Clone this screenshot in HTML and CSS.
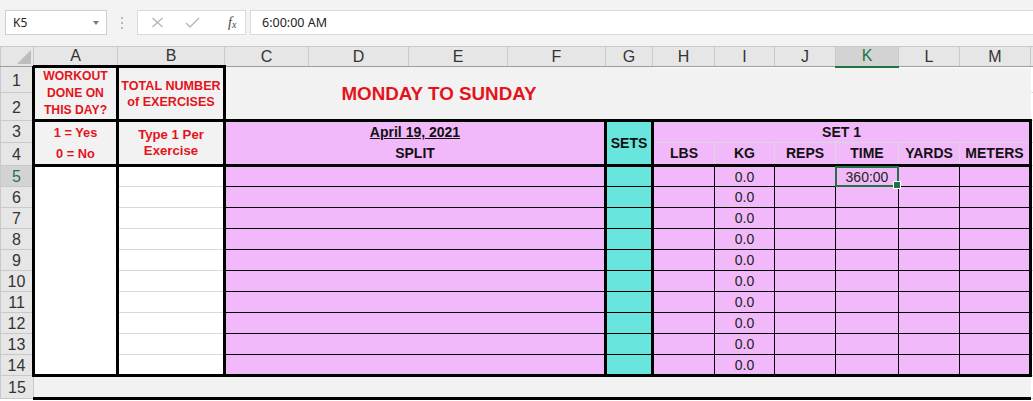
FILE: index.html
```html
<!DOCTYPE html>
<html lang="en">
<head>
    <meta charset="UTF-8">
    <title>Workout Log</title>
    <link rel="stylesheet" href="styles.css">
</head>
<body>
    <!-- Barra de fórmulas -->
    <div class="formula-bar">
        <div class="name-box">
            <span>K5</span>
            <span class="caret"></span>
        </div>
        <div class="bar-dots"><i></i><i></i><i></i></div>
        <div class="fx-box">
            <svg width="13" height="11" viewBox="0 0 13 11"><path d="M1.5 1 L11.5 10 M11.5 1 L1.5 10" stroke="#b4b4b4" stroke-width="1.3" fill="none"/></svg>
            <svg width="15" height="11" viewBox="0 0 15 11"><path d="M1 6 L5 10 L14 1" stroke="#b4b4b4" stroke-width="1.3" fill="none"/></svg>
            <span class="fx">f<sub>x</sub></span>
        </div>
        <div class="formula-input">6:00:00 AM</div>
    </div>

    <div class="sheet-wrap">
        <table class="sheet">
            <colgroup>
                <col style="width:33px"><col style="width:84px"><col style="width:107px">
                <col style="width:84px"><col style="width:100px"><col style="width:99px"><col style="width:98px">
                <col style="width:47px"><col style="width:62px"><col style="width:60px"><col style="width:61px">
                <col style="width:63px"><col style="width:61px"><col style="width:71px"><col style="width:40px">
            </colgroup>
            <tr class="hdr">
                <td class="ch corner"><span class="tri"></span></td>
                <td class="ch">A</td><td class="ch">B</td><td class="ch">C</td><td class="ch">D</td>
                <td class="ch">E</td><td class="ch">F</td><td class="ch">G</td><td class="ch">H</td>
                <td class="ch">I</td><td class="ch">J</td><td class="ch sel">K</td><td class="ch">L</td>
                <td class="ch">M</td><td class="ch"></td>
            </tr>
            <tr class="r1">
                <td class="rh">1</td>
                <td rowspan="2" class="grey lbl tk workout">WORKOUT<br>DONE ON<br>THIS DAY?</td>
                <td rowspan="2" class="grey lbl tk total">TOTAL NUMBER<br>of EXERCISES</td>
                <td rowspan="2" colspan="5" class="grey title tk-l">MONDAY TO SUNDAY</td>
                <td rowspan="2" colspan="6" class="grey plain"></td>
                <td></td>
            </tr>
            <tr class="r2">
                <td class="rh">2</td>
                <td></td>
            </tr>
            <tr class="r3">
                <td class="rh">3</td>
                <td rowspan="2" class="grey lbl tk yesno"><div>1 = Yes</div><div>0 = No</div></td>
                <td rowspan="2" class="grey lbl tk type">Type 1 Per<br>Exercise</td>
                <td rowspan="2" colspan="4" class="pink hd tk-l tk-t tk-b split"><div class="date">April 19, 2021</div><div>SPLIT</div></td>
                <td rowspan="2" class="teal hd tk">SETS</td>
                <td colspan="6" class="pink hd tk-t tk-r">SET 1</td>
                <td></td>
            </tr>
            <tr class="r4">
                <td class="rh">4</td>
                <td class="pink hd tk-b">LBS</td>
                <td class="pink hd tk-b">KG</td>
                <td class="pink hd tk-b">REPS</td>
                <td class="pink hd tk-b">TIME</td>
                <td class="pink hd tk-b">YARDS</td>
                <td class="pink hd tk-b tk-r">METERS</td>
                <td></td>
            </tr>
            <tr class="data">
                <td class="rh sel">5</td>
                <td rowspan="10" class="white tk"></td>
                <td class="white tk-l tk-r"></td>
                <td colspan="4" class="pink ln tk-l"></td>
                <td class="teal ln tk-l tk-r"></td>
                <td class="pink ln"></td><td class="pink ln num">0.0</td><td class="pink ln"></td>
                <td class="pink ln num cur">360:00<span class="cursor"></span></td>
                <td class="pink ln"></td><td class="pink ln tk-r"></td>
                <td></td>
            </tr>
            <tr class="data">
                <td class="rh">6</td>
                <td class="white tk-l tk-r"></td>
                <td colspan="4" class="pink ln tk-l"></td>
                <td class="teal ln tk-l tk-r"></td>
                <td class="pink ln"></td><td class="pink ln num">0.0</td><td class="pink ln"></td>
                <td class="pink ln"></td><td class="pink ln"></td><td class="pink ln tk-r"></td>
                <td></td>
            </tr>
            <tr class="data">
                <td class="rh">7</td>
                <td class="white tk-l tk-r"></td>
                <td colspan="4" class="pink ln tk-l"></td>
                <td class="teal ln tk-l tk-r"></td>
                <td class="pink ln"></td><td class="pink ln num">0.0</td><td class="pink ln"></td>
                <td class="pink ln"></td><td class="pink ln"></td><td class="pink ln tk-r"></td>
                <td></td>
            </tr>
            <tr class="data">
                <td class="rh">8</td>
                <td class="white tk-l tk-r"></td>
                <td colspan="4" class="pink ln tk-l"></td>
                <td class="teal ln tk-l tk-r"></td>
                <td class="pink ln"></td><td class="pink ln num">0.0</td><td class="pink ln"></td>
                <td class="pink ln"></td><td class="pink ln"></td><td class="pink ln tk-r"></td>
                <td></td>
            </tr>
            <tr class="data">
                <td class="rh">9</td>
                <td class="white tk-l tk-r"></td>
                <td colspan="4" class="pink ln tk-l"></td>
                <td class="teal ln tk-l tk-r"></td>
                <td class="pink ln"></td><td class="pink ln num">0.0</td><td class="pink ln"></td>
                <td class="pink ln"></td><td class="pink ln"></td><td class="pink ln tk-r"></td>
                <td></td>
            </tr>
            <tr class="data">
                <td class="rh">10</td>
                <td class="white tk-l tk-r"></td>
                <td colspan="4" class="pink ln tk-l"></td>
                <td class="teal ln tk-l tk-r"></td>
                <td class="pink ln"></td><td class="pink ln num">0.0</td><td class="pink ln"></td>
                <td class="pink ln"></td><td class="pink ln"></td><td class="pink ln tk-r"></td>
                <td></td>
            </tr>
            <tr class="data">
                <td class="rh">11</td>
                <td class="white tk-l tk-r"></td>
                <td colspan="4" class="pink ln tk-l"></td>
                <td class="teal ln tk-l tk-r"></td>
                <td class="pink ln"></td><td class="pink ln num">0.0</td><td class="pink ln"></td>
                <td class="pink ln"></td><td class="pink ln"></td><td class="pink ln tk-r"></td>
                <td></td>
            </tr>
            <tr class="data">
                <td class="rh">12</td>
                <td class="white tk-l tk-r"></td>
                <td colspan="4" class="pink ln tk-l"></td>
                <td class="teal ln tk-l tk-r"></td>
                <td class="pink ln"></td><td class="pink ln num">0.0</td><td class="pink ln"></td>
                <td class="pink ln"></td><td class="pink ln"></td><td class="pink ln tk-r"></td>
                <td></td>
            </tr>
            <tr class="data">
                <td class="rh">13</td>
                <td class="white tk-l tk-r"></td>
                <td colspan="4" class="pink ln tk-l"></td>
                <td class="teal ln tk-l tk-r"></td>
                <td class="pink ln"></td><td class="pink ln num">0.0</td><td class="pink ln"></td>
                <td class="pink ln"></td><td class="pink ln"></td><td class="pink ln tk-r"></td>
                <td></td>
            </tr>
            <tr class="data">
                <td class="rh">14</td>
                <td class="white tk-l tk-r tk-b"></td>
                <td colspan="4" class="pink ln tk-l tk-b"></td>
                <td class="teal ln tk-l tk-r tk-b"></td>
                <td class="pink ln tk-b"></td><td class="pink ln num tk-b">0.0</td><td class="pink ln tk-b"></td>
                <td class="pink ln tk-b"></td><td class="pink ln tk-b"></td><td class="pink ln tk-r tk-b"></td>
                <td></td>
            </tr>
            <tr class="r15">
                <td class="rh">15</td>
                <td colspan="13" class="grey plain tk-t tk-b"></td>
                <td></td>
            </tr>
        </table>
    </div>
</body>
</html>
```

FILE: styles.css
```css
* {
    box-sizing: border-box;
}

body {
    margin: 0;
    background-color: #ffffff;
    overflow: hidden;
    font-family: 'Liberation Sans', Arial, sans-serif;
}

/* Barra de fórmulas */
.formula-bar {
    height: 46px;
    background-color: #f3f3f3;
    display: flex;
    align-items: flex-start;
    padding-top: 10px;
    padding-left: 5px;
    font-family: 'Noto Sans', sans-serif;
    font-size: 12px;
    color: #222;
}

.name-box {
    width: 102px;
    height: 25px;
    background-color: #fff;
    border: 1px solid #cfcfcf;
    display: flex;
    align-items: center;
    justify-content: space-between;
    padding: 0 7px 0 7px;
}

.caret {
    width: 0;
    height: 0;
    border-left: 3.5px solid transparent;
    border-right: 3.5px solid transparent;
    border-top: 4px solid #7a7a7a;
}

.bar-dots {
    width: 30px;
    height: 25px;
    display: flex;
    flex-direction: column;
    align-items: center;
    justify-content: center;
    gap: 3px;
}

.bar-dots i {
    width: 2px;
    height: 2px;
    background-color: #b8b8b8;
}

.fx-box {
    width: 109px;
    height: 25px;
    background-color: #fff;
    border: 1px solid #dadada;
    display: flex;
    align-items: center;
    padding-left: 13px;
    gap: 21px;
}

.fx {
    font-family: 'Liberation Serif', serif;
    font-style: italic;
    font-size: 14px;
    color: #444;
    margin-left: 7px;
}

.fx sub {
    font-size: 10px;
    vertical-align: -1px;
}

.formula-input {
    flex: 1;
    height: 25px;
    margin-left: 4px;
    background-color: #fff;
    border: 1px solid #dadada;
    border-right: none;
    display: flex;
    align-items: center;
    padding-left: 11px;
    font-size: 12.5px;
}

/* Hoja */
.sheet-wrap {
    width: 1033px;
    overflow: hidden;
}

.sheet {
    border-collapse: collapse;
    table-layout: fixed;
    width: 1070px;
    color: #111;
}

.sheet td {
    padding: 0;
    border: 1px solid #d9d9d9;
    text-align: center;
    vertical-align: middle;
    white-space: nowrap;
    overflow: hidden;
    line-height: 16px;
}

.hdr { height: 20px; }
.r1 { height: 26px; }
.r2 { height: 27px; }
.r3 { height: 21px; }
.r4 { height: 22px; }
.data { height: 21px; }
.r15 { height: 23px; }

.sheet .ch {
    background-color: #e6e6e6;
    font-size: 16px;
    color: #333;
    border-color: #c9c9c9;
    border-bottom-color: #9e9e9e;
    line-height: 18px;
}

.sheet .ch.sel {
    background-color: #d3d3d3;
    color: #217346;
    border-bottom: 2px solid #217346;
}

.corner {
    position: relative;
}

.tri {
    position: absolute;
    right: 2px;
    bottom: 2px;
    width: 0;
    height: 0;
    border-left: 14px solid transparent;
    border-bottom: 14px solid #bdbdbd;
}

.sheet .rh {
    background-color: #e6e6e6;
    font-size: 16px;
    color: #333;
    border-color: #c9c9c9;
    padding-top: 2px;
}

.sheet .rh.sel {
    background-color: #d3d3d3;
    color: #217346;
    border-right: 2px solid #217346;
}

.grey { background-color: #f2f2f2; }
.pink { background-color: #f1b9f9; }
.teal { background-color: #68e5dc; }
.white { background-color: #ffffff; }

.sheet .plain { border-color: #f2f2f2; }

.lbl {
    color: #e3141c;
    font-weight: bold;
}

.sheet .workout {
    font-size: 12.2px;
    line-height: 17px;
}

.sheet .total {
    font-size: 12.6px;
    line-height: 16px;
}

.yesno {
    font-size: 12.8px;
}

.yesno div {
    line-height: 21px;
}

.sheet .type {
    font-size: 13.2px;
    line-height: 16px;
}

.sheet .title {
    color: #e3141c;
    font-weight: bold;
    font-size: 18.8px;
    line-height: 22px;
    border-top-color: #9e9e9e;
    border-right-color: #f2f2f2;
    border-bottom-color: #f2f2f2;
    padding-top: 2px;
}

.hd {
    font-weight: bold;
    font-size: 14px;
}

.split div {
    line-height: 21px;
}

.date {
    text-decoration: underline;
}

.num {
    font-size: 14px;
    color: #222;
}

.ln { border: 1px solid #000 !important; }
.tk { border: 3px solid #000 !important; }
.tk-l { border-left: 3px solid #000 !important; }
.tk-r { border-right: 3px solid #000 !important; }
.tk-t { border-top: 3px solid #000 !important; }
.tk-b { border-bottom: 3px solid #000 !important; }

.sheet .cur {
    position: relative;
    overflow: visible;
}

.cursor {
    position: absolute;
    top: -1px;
    left: -1px;
    right: -1px;
    bottom: -1px;
    border: 2px solid #217346;
}

.cursor::after {
    content: '';
    position: absolute;
    right: -4px;
    bottom: -4px;
    width: 6px;
    height: 6px;
    background-color: #217346;
    border: 1px solid #fff;
}
```
